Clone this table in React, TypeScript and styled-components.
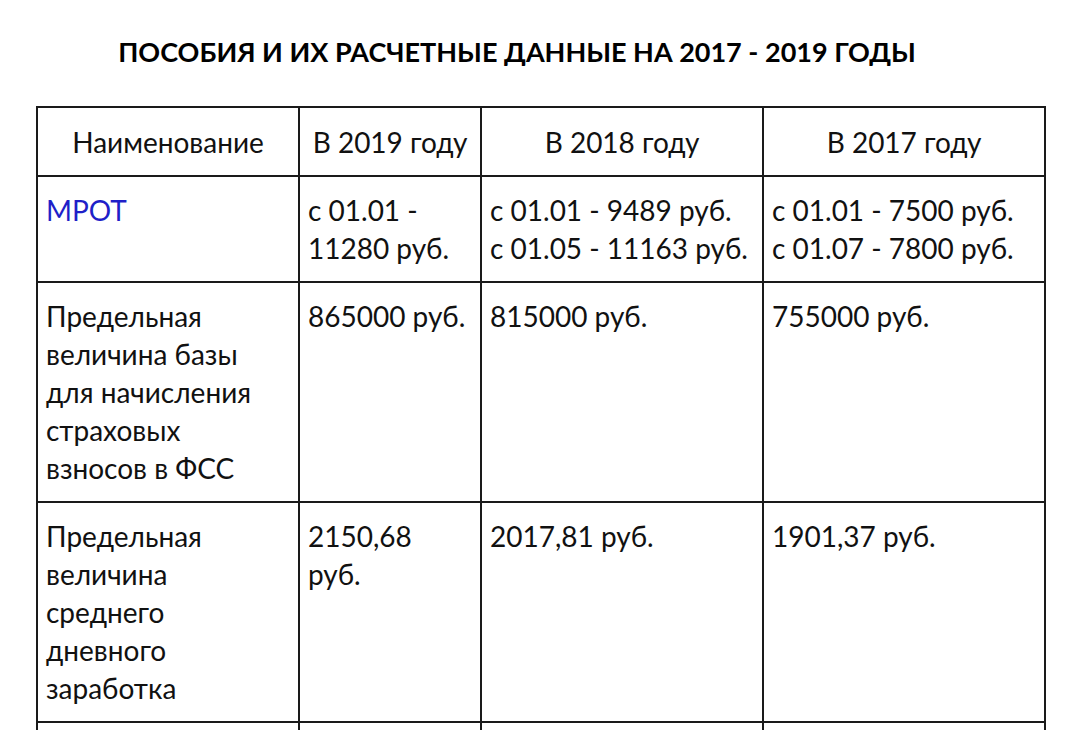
import styled, { createGlobalStyle } from 'styled-components';

const GlobalStyle = createGlobalStyle`
  html, body {
    margin: 0;
    padding: 0;
    background: #fff;
  }
  body {
    font-family: Lato, "Open Sans", sans-serif;
    color: #111;
  }
`

const rows = [
  {
    name: 'МРОТ',
    link: true,
    y2019: ['с 01.01 -', '11280 руб.'],
    y2018: ['с 01.01 - 9489 руб.', 'с 01.05 - 11163 руб.'],
    y2017: ['с 01.01 - 7500 руб.', 'с 01.07 - 7800 руб.'],
  },
  {
    name: 'Предельная\nвеличина базы\nдля начисления\nстраховых\nвзносов в ФСС',
    y2019: ['865000 руб.'],
    y2018: ['815000 руб.'],
    y2017: ['755000 руб.'],
  },
  {
    name: 'Предельная\nвеличина\nсреднего\nдневного\nзаработка',
    y2019: ['2150,68', 'руб.'],
    y2018: ['2017,81 руб.'],
    y2017: ['1901,37 руб.'],
  },
]

const Lines = ({ items }: { items: string[] }) => (
  <>
    {items.map((t, i) => (
      <div key={i}>{t}</div>
    ))}
  </>
)

const App = () => {
  return (
    <Page>
      <GlobalStyle />
      <Title>ПОСОБИЯ И ИХ РАСЧЕТНЫЕ ДАННЫЕ НА 2017 - 2019 ГОДЫ</Title>
      <Table>
        <colgroup>
          <col style={{ width: 262 }} />
          <col style={{ width: 182 }} />
          <col style={{ width: 282 }} />
          <col style={{ width: 282 }} />
        </colgroup>
        <thead>
          <tr>
            <Head>Наименование</Head>
            <Head>В 2019 году</Head>
            <Head>В 2018 году</Head>
            <Head>В 2017 году</Head>
          </tr>
        </thead>
        <tbody>
          {rows.map((r, i) => (
            <tr key={i}>
              <Cell $link={r.link}>
                <Lines items={r.name.split('\n')} />
              </Cell>
              <Cell>
                <Lines items={r.y2019} />
              </Cell>
              <Cell>
                <Lines items={r.y2018} />
              </Cell>
              <Cell>
                <Lines items={r.y2017} />
              </Cell>
            </tr>
          ))}
          <tr>
            <Cell $empty />
            <Cell $empty />
            <Cell $empty />
            <Cell $empty />
          </tr>
        </tbody>
      </Table>
    </Page>
  );
};

const Page = styled.div`
  padding: 33px 0 0 36px;
  width: 1080px;
  box-sizing: border-box;
`
const Title = styled.h1`
  margin: 0 82px 36px 0;
  text-align: center;
  font-size: 27px;
  line-height: 37px;
  font-weight: 700;
  color: #000;
`
const Table = styled.table`
  border-collapse: collapse;
  table-layout: fixed;
  width: 1010px;
  font-size: 28px;
  line-height: 38px;
`
const Head = styled.th`
  border: 2px solid #1a1a1a;
  height: 67px;
  padding: 0 10px;
  font-weight: 400;
  text-align: center;
  vertical-align: middle;
  color: #111;
  white-space: nowrap;
`
const Cell = styled.td<{ $link?: boolean; $empty?: boolean }>`
  border: 2px solid #1a1a1a;
  padding: 14px 10px 14px 8px;
  vertical-align: top;
  text-align: left;
  white-space: nowrap;
  color: ${p => (p.$link ? '#1f1fc8' : '#111')};
  height: ${p => (p.$empty ? '60px' : 'auto')};
`

export default App;
